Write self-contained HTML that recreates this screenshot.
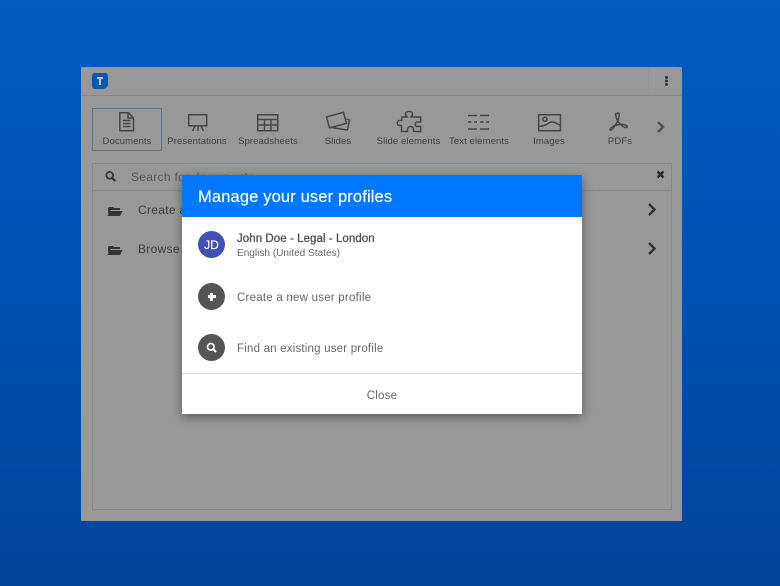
<!DOCTYPE html>
<html><head><meta charset="utf-8"><style>
html,body{margin:0;padding:0}
body{width:780px;height:586px;overflow:hidden;position:relative;background:linear-gradient(180deg,#0159c1 0%,#0051b0 50%,#00449b 100%);font-family:"Liberation Sans",sans-serif}
.a{position:absolute}
.t{position:absolute;white-space:nowrap}
.lb{position:absolute;top:136px;width:90px;text-align:center;font-size:9.5px;line-height:12px;color:#3f3f3f;letter-spacing:.1px}
svg{position:absolute;overflow:visible}
.s{fill:none;stroke:#464646;stroke-width:1.5}
</style></head><body>
<div class="a" style="left:81px;top:67px;width:601px;height:454px;background:#989898"></div>
<div class="a" style="left:81px;top:95px;width:601px;height:1px;background:#878787"></div>
<div class="a" style="left:648px;top:68px;width:1px;height:27px;background:#929292"></div>
<div class="a" style="left:92px;top:73px;width:16px;height:16px;background:#0a57ad;border-radius:3px 3px 5px 3px"></div>
<div class="a" style="left:97px;top:77px;width:6px;height:2px;background:#b9c6d6"></div>
<div class="a" style="left:99px;top:77px;width:2px;height:8px;background:#b9c6d6"></div>
<div class="a" style="left:665px;top:76px;width:3px;height:3px;background:#333;border-radius:50%;box-shadow:0 3.500px 0 #333,0 7px 0 #333"></div>

<div class="a" style="left:92px;top:108px;width:68px;height:41px;border:1px solid #5a7488"></div>

<svg style="left:0;top:0" width="780" height="586">
<path class="s" d="M119.800 112.800h8.700l5 5v13h-13.700zM128 113v5h5M123 120.500h7.500M123 123.500h7.500M123 126.500h7.500"/>
<path class="s" d="M188.700 114.700h18v11h-18zM198 126v5M195 126l-2.500 5M201 126l2.500 5"/>
<path class="s" d="M257.700 114.700h20v16h-20zM257.700 119.500h20M257.700 125h20M264.500 119.500v11M271 119.500v11"/>
<path class="s" d="M326.500 117l17-4.700 3 11-17 4.500zM346.500 119l3 1-2 10-16-2.500"/>
<path class="s" d="M402 117h5c-1-1-1.500-2-1.500-3 0-3.500 7-3.500 7 0 0 1-.5 2-1.500 3h9.700v5h-3.200c-3 0-3 4.500 0 4.500h3.200v5h-7.200v-2c0-4-6-4-6 0v2h-6v-6h-2c-3 0-3-5 0-5h2z"/>
<path class="s" stroke-width="1.700" d="M468 115.500h9M480 115.500h9M468 122h3.500M474 122h3M480 122h3.500M486 122h3M468 129h9M480 129h9"/>
<path class="s" d="M538.700 114.700h21.800v16h-21.800zM538.700 126.500c5-.5 8-1.500 11-4 3-1.500 6 .5 11 3"/>
<circle class="s" cx="545" cy="119.300" r="2"/>
<path class="s" d="M617 113.500c1.500-1.500 2.500 0 2 3-.7 4-4 10-7 13-1.500 1.500-2.500.5-1.500-1 3-3.500 10-5 15-3.500 2 .6 2.500 2.500.5 2.500-3.500 0-8-5-9.500-9-1-2.500-1-4-.5-5z"/>
<path d="M658 122l5 5-5 5" fill="none" stroke="#505050" stroke-width="2.500"/>
<circle cx="109.700" cy="175.300" r="3.400" fill="none" stroke="#363636" stroke-width="1.800"/><path d="M112.200 178l3 3" stroke="#363636" stroke-width="2.200"/>
<path d="M657.500 171.500l6 6M663.500 171.500l-6 6" stroke="#2b2b2b" stroke-width="2.400"/>
<path d="M108 214v-6l1-1h4l1 1h6v2h-9z M110 211h12.500l-2.500 5h-12.500z" fill="#333"/>
<path d="M108 253v-6l1-1h4l1 1h6v2h-9z M110 250h12.500l-2.500 5h-12.500z" fill="#333"/>
<path d="M649 204l5.500 5.500-5.500 5.500M649 243l5.500 5.500-5.500 5.500" fill="none" stroke="#333" stroke-width="2.500"/>
</svg>

<div class="lb" style="left:82px">Documents</div>
<div class="lb" style="left:152px">Presentations</div>
<div class="lb" style="left:223px">Spreadsheets</div>
<div class="lb" style="left:293px">Slides</div>
<div class="lb" style="left:363.500px">Slide elements</div>
<div class="lb" style="left:434px">Text elements</div>
<div class="lb" style="left:504px">Images</div>
<div class="lb" style="left:575px">PDFs</div>

<div class="a" style="left:92px;top:163px;width:578px;height:345px;border:1px solid #878787"></div>
<div class="a" style="left:93px;top:190px;width:578px;height:1px;background:#878787"></div>
<div class="t" style="left:131px;top:170px;font-size:12px;line-height:14px;color:#555;letter-spacing:.3px">Search for documents</div>
<div class="t" style="left:138px;top:203px;font-size:12px;line-height:14px;color:#3c3c3c;letter-spacing:.3px">Create a</div>
<div class="t" style="left:138px;top:242px;font-size:12px;line-height:14px;color:#3c3c3c;letter-spacing:.3px">Browse t</div>

<div class="a" style="left:182px;top:175px;width:400px;height:239px;background:#fff;box-shadow:0 3px 10px rgba(0,0,0,.4)">
<div class="a" style="left:0;top:0;width:400px;height:42px;background:#0078ff"></div>
<div class="t" style="left:16px;top:12px;font-size:16.500px;line-height:20px;color:#fff;letter-spacing:.14px;-webkit-text-stroke:.15px #fff">Manage your user profiles</div>
<div class="a" style="left:16px;top:56px;width:27px;height:27px;border-radius:50%;background:#3f51b5;color:#fff;font-size:12px;line-height:29px;text-align:center;-webkit-text-stroke:.2px #fff">JD</div>
<div class="t" style="left:55px;top:57px;font-size:11.500px;line-height:14px;color:#555;letter-spacing:.06px;-webkit-text-stroke:.35px #555">John Doe - Legal - London</div>
<div class="t" style="left:55px;top:72px;font-size:10px;line-height:13px;color:#666;letter-spacing:.03px">English (United States)</div>
<div class="a" style="left:16px;top:108px;width:27px;height:27px;border-radius:50%;background:#555"></div>
<div class="a" style="left:25.500px;top:120.200px;width:8px;height:2.600px;background:#fff"></div>
<div class="a" style="left:28.200px;top:117.500px;width:2.600px;height:8px;background:#fff"></div>
<div class="t" style="left:55px;top:116px;font-size:11.500px;line-height:14px;color:#666;letter-spacing:.23px">Create a new user profile</div>
<div class="a" style="left:16px;top:159px;width:27px;height:27px;border-radius:50%;background:#555"></div>
<svg style="left:16px;top:159px" width="27" height="27"><circle cx="12.800" cy="12.800" r="3.300" fill="none" stroke="#fff" stroke-width="1.800"/><path d="M15.200 15.200l2.800 2.800" stroke="#fff" stroke-width="2"/></svg>
<div class="t" style="left:55px;top:167px;font-size:11.500px;line-height:14px;color:#666;letter-spacing:.2px">Find an existing user profile</div>
<div class="a" style="left:0;top:198px;width:400px;height:1px;background:#ddd"></div>
<div class="t" style="left:0;top:214px;width:400px;text-align:center;font-size:11.500px;line-height:14px;color:#666;letter-spacing:.2px">Close</div>
</div>
</body></html>
